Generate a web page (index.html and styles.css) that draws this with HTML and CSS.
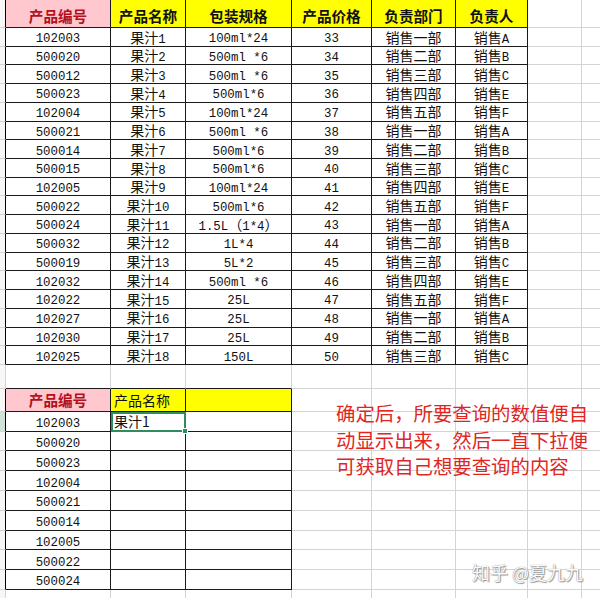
FILE: index.html
```html
<!DOCTYPE html>
<html lang="zh-CN">
<head>
<meta charset="utf-8">
<title>产品查询</title>
<link rel="stylesheet" href="styles.css">
</head>
<body>
<div class="wrap">
<table class="sheet">
<colgroup>
<col class="w-s"><col class="w-a"><col class="w-b"><col class="w-c"><col class="w-d"><col class="w-e"><col class="w-f"><col class="w-g"><col class="w-h">
</colgroup>
<tbody>
<tr class="h1"><td class="s sl"></td><td class="t hp">产品编号</td><td class="t hy">产品名称</td><td class="t hy">包装规格</td><td class="t hy">产品价格</td><td class="t hy">负责部门</td><td class="t hy">负责人</td><td></td><td></td></tr>
<tr class="r"><td class="s sl"></td><td class="t n">102003</td><td class="t">果汁<span class="n">1</span></td><td class="t n">100ml*24</td><td class="t n">33</td><td class="t">销售一部</td><td class="t">销售<span class="n">A</span></td><td></td><td></td></tr>
<tr class="r"><td class="s sl"></td><td class="t n">500020</td><td class="t">果汁<span class="n">2</span></td><td class="t n">500ml *6</td><td class="t n">34</td><td class="t">销售二部</td><td class="t">销售<span class="n">B</span></td><td></td><td></td></tr>
<tr class="r"><td class="s sl"></td><td class="t n">500012</td><td class="t">果汁<span class="n">3</span></td><td class="t n">500ml *6</td><td class="t n">35</td><td class="t">销售三部</td><td class="t">销售<span class="n">C</span></td><td></td><td></td></tr>
<tr class="r"><td class="s sl"></td><td class="t n">500023</td><td class="t">果汁<span class="n">4</span></td><td class="t n">500ml*6</td><td class="t n">36</td><td class="t">销售四部</td><td class="t">销售<span class="n">E</span></td><td></td><td></td></tr>
<tr class="r"><td class="s sl"></td><td class="t n">102004</td><td class="t">果汁<span class="n">5</span></td><td class="t n">100ml*24</td><td class="t n">37</td><td class="t">销售五部</td><td class="t">销售<span class="n">F</span></td><td></td><td></td></tr>
<tr class="r"><td class="s sl"></td><td class="t n">500021</td><td class="t">果汁<span class="n">6</span></td><td class="t n">500ml *6</td><td class="t n">38</td><td class="t">销售一部</td><td class="t">销售<span class="n">A</span></td><td></td><td></td></tr>
<tr class="r"><td class="s sl"></td><td class="t n">500014</td><td class="t">果汁<span class="n">7</span></td><td class="t n">500ml*6</td><td class="t n">39</td><td class="t">销售二部</td><td class="t">销售<span class="n">B</span></td><td></td><td></td></tr>
<tr class="r"><td class="s sl"></td><td class="t n">500015</td><td class="t">果汁<span class="n">8</span></td><td class="t n">500ml*6</td><td class="t n">40</td><td class="t">销售三部</td><td class="t">销售<span class="n">C</span></td><td></td><td></td></tr>
<tr class="r"><td class="s sl"></td><td class="t n">102005</td><td class="t">果汁<span class="n">9</span></td><td class="t n">100ml*24</td><td class="t n">41</td><td class="t">销售四部</td><td class="t">销售<span class="n">E</span></td><td></td><td></td></tr>
<tr class="r"><td class="s sl"></td><td class="t n">500022</td><td class="t">果汁<span class="n">10</span></td><td class="t n">500ml*6</td><td class="t n">42</td><td class="t">销售五部</td><td class="t">销售<span class="n">F</span></td><td></td><td></td></tr>
<tr class="r"><td class="s sl"></td><td class="t n">500024</td><td class="t">果汁<span class="n">11</span></td><td class="t"><span class="n">1.5L</span>（<span class="n">1*4</span>）</td><td class="t n">43</td><td class="t">销售一部</td><td class="t">销售<span class="n">A</span></td><td></td><td></td></tr>
<tr class="r"><td class="s sl"></td><td class="t n">500032</td><td class="t">果汁<span class="n">12</span></td><td class="t n">1L*4</td><td class="t n">44</td><td class="t">销售二部</td><td class="t">销售<span class="n">B</span></td><td></td><td></td></tr>
<tr class="r"><td class="s sl"></td><td class="t n">500019</td><td class="t">果汁<span class="n">13</span></td><td class="t n">5L*2</td><td class="t n">45</td><td class="t">销售三部</td><td class="t">销售<span class="n">C</span></td><td></td><td></td></tr>
<tr class="r"><td class="s sl"></td><td class="t n">102032</td><td class="t">果汁<span class="n">14</span></td><td class="t n">500ml *6</td><td class="t n">46</td><td class="t">销售四部</td><td class="t">销售<span class="n">E</span></td><td></td><td></td></tr>
<tr class="r"><td class="s sl"></td><td class="t n">102022</td><td class="t">果汁<span class="n">15</span></td><td class="t n">25L</td><td class="t n">47</td><td class="t">销售五部</td><td class="t">销售<span class="n">F</span></td><td></td><td></td></tr>
<tr class="r"><td class="s sl"></td><td class="t n">102027</td><td class="t">果汁<span class="n">16</span></td><td class="t n">25L</td><td class="t n">48</td><td class="t">销售一部</td><td class="t">销售<span class="n">A</span></td><td></td><td></td></tr>
<tr class="r"><td class="s sl"></td><td class="t n">102030</td><td class="t">果汁<span class="n">17</span></td><td class="t n">25L</td><td class="t n">49</td><td class="t">销售二部</td><td class="t">销售<span class="n">B</span></td><td></td><td></td></tr>
<tr class="r"><td class="s sl"></td><td class="t n">102025</td><td class="t">果汁<span class="n">18</span></td><td class="t n">150L</td><td class="t n">50</td><td class="t">销售三部</td><td class="t">销售<span class="n">C</span></td><td></td><td></td></tr>
<tr class="gap"><td class="s"></td><td class="ab"></td><td class="ab"></td><td class="ab"></td><td></td><td></td><td></td><td></td><td></td></tr>
<tr class="h2"><td class="s sl"></td><td class="t hp">产品编号</td><td class="t hy left">产品名称</td><td class="t hy"></td><td></td><td></td><td></td><td></td><td></td></tr>
<tr class="r2"><td class="s sl cur"></td><td class="t n">102003</td><td class="t sel">果汁1</td><td class="t"></td><td></td><td></td><td></td><td></td><td></td></tr>
<tr class="r2"><td class="s sl"></td><td class="t n">500020</td><td class="t"></td><td class="t"></td><td></td><td></td><td></td><td></td><td></td></tr>
<tr class="r2"><td class="s sl"></td><td class="t n">500023</td><td class="t"></td><td class="t"></td><td></td><td></td><td></td><td></td><td></td></tr>
<tr class="r2"><td class="s sl"></td><td class="t n">102004</td><td class="t"></td><td class="t"></td><td></td><td></td><td></td><td></td><td></td></tr>
<tr class="r2"><td class="s sl"></td><td class="t n">500021</td><td class="t"></td><td class="t"></td><td></td><td></td><td></td><td></td><td></td></tr>
<tr class="r2"><td class="s sl"></td><td class="t n">500014</td><td class="t"></td><td class="t"></td><td></td><td></td><td></td><td></td><td></td></tr>
<tr class="r2"><td class="s sl"></td><td class="t n">102005</td><td class="t"></td><td class="t"></td><td></td><td></td><td></td><td></td><td></td></tr>
<tr class="r2"><td class="s sl"></td><td class="t n">500022</td><td class="t"></td><td class="t"></td><td></td><td></td><td></td><td></td><td></td></tr>
<tr class="r2"><td class="s sl"></td><td class="t n">500024</td><td class="t"></td><td class="t"></td><td></td><td></td><td></td><td></td><td></td></tr>
<tr class="tail"><td class="s"></td><td></td><td></td><td></td><td></td><td></td><td></td><td></td><td></td></tr>
</tbody>
</table>
<p class="note">确定后，所要查询的数值便自<br>动显示出来，然后一直下拉便<br>可获取自己想要查询的内容</p>
<p class="mark">知乎 @夏九九</p>
</div>
</body>
</html>
```
FILE: styles.css
```css
html, body {
  margin: 0;
  padding: 0;
  background: #fff;
}
.wrap {
  position: relative;
  width: 600px;
  height: 598px;
  overflow: hidden;
}
.sheet {
  table-layout: fixed;
  width: 600px;
  border-collapse: separate;
  border-spacing: 0;
  font-family: "Noto Sans CJK SC", sans-serif;
  font-size: 14px;
  color: #111;
}
.w-s { width: 6px; }
.w-a { width: 105px; }
.w-b { width: 75px; }
.w-c { width: 106px; }
.w-d { width: 80px; }
.w-e { width: 84px; }
.w-f { width: 72px; }
.w-g { width: 54px; }
.w-h { width: 18px; }
.sheet td {
  padding: 0;
  border-right: 1px solid #d4d4d4;
  border-bottom: 1px solid #d4d4d4;
  text-align: center;
  vertical-align: middle;
  line-height: 14px;
  white-space: nowrap;
  overflow: visible;
}
.sheet td:last-child {
  border-right: 0;
}
.sheet .n {
  font-family: "Liberation Mono", "Noto Sans CJK SC", monospace;
  font-size: 12.4px;
  color: #111;
}
.sheet td.n {
  line-height: 12px;
}
.sheet span.n {
  line-height: 0;
}
.sheet td.s {
  background: #f7f7f7;
}
.sheet td.sl {
  border-right-color: #000;
}
.sheet td.cur {
  background: #cfe3d6;
}
.sheet td.t {
  border-right-color: #1a1a1a;
  border-bottom-color: #1a1a1a;
}
.sheet td.ab {
  border-bottom-color: #1a1a1a;
}
.h1 { height: 28px; }
.r { height: 18.72px; }
.gap { height: 24px; }
.h2 { height: 23px; }
.r2 { height: 19.78px; }
.tail { height: 20px; }
.r td, .r2 td {
  vertical-align: top;
  padding-top: 1.5px;
}
.r td.n {
  padding-top: 5.3px;
}
.r2 td.n {
  padding-top: 6.3px;
}
.h1 td {
  padding-top: 5px;
}
.sheet td.hp {
  background: #ffc7ce;
  color: #b3101c;
  font-weight: 700;
  font-size: 14.6px;
}
.sheet td.hy {
  background: #ffff00;
  color: #111;
  font-weight: 700;
  font-size: 14.6px;
}
.sheet td.left {
  text-align: left;
  padding-left: 3px;
  font-weight: 400;
  font-size: 14px;
}
.sheet td.sel {
  position: relative;
  text-align: left;
  padding-left: 3px;
  padding-top: 2.5px;
  outline: 2px solid #2f8c5e;
  outline-offset: -2px;
}
.sheet td.sel::after {
  content: "";
  position: absolute;
  right: -3px;
  bottom: -3px;
  width: 4px;
  height: 4px;
  background: #2f8c5e;
  border: 1px solid #fff;
}
.note {
  position: absolute;
  left: 336px;
  top: 400px;
  margin: 0;
  font-family: "Noto Sans CJK SC", sans-serif;
  font-size: 19.4px;
  line-height: 26.5px;
  color: #e0261f;
  white-space: nowrap;
}
.mark {
  position: absolute;
  left: 472px;
  top: 560px;
  margin: 0;
  font-family: "Noto Sans CJK SC", sans-serif;
  font-size: 18px;
  line-height: 24px;
  color: #fbfbfb;
  text-shadow: 0 0 1px #6e6e6e, 1px 1px 1px #9a9a9a;
  white-space: nowrap;
}
```
